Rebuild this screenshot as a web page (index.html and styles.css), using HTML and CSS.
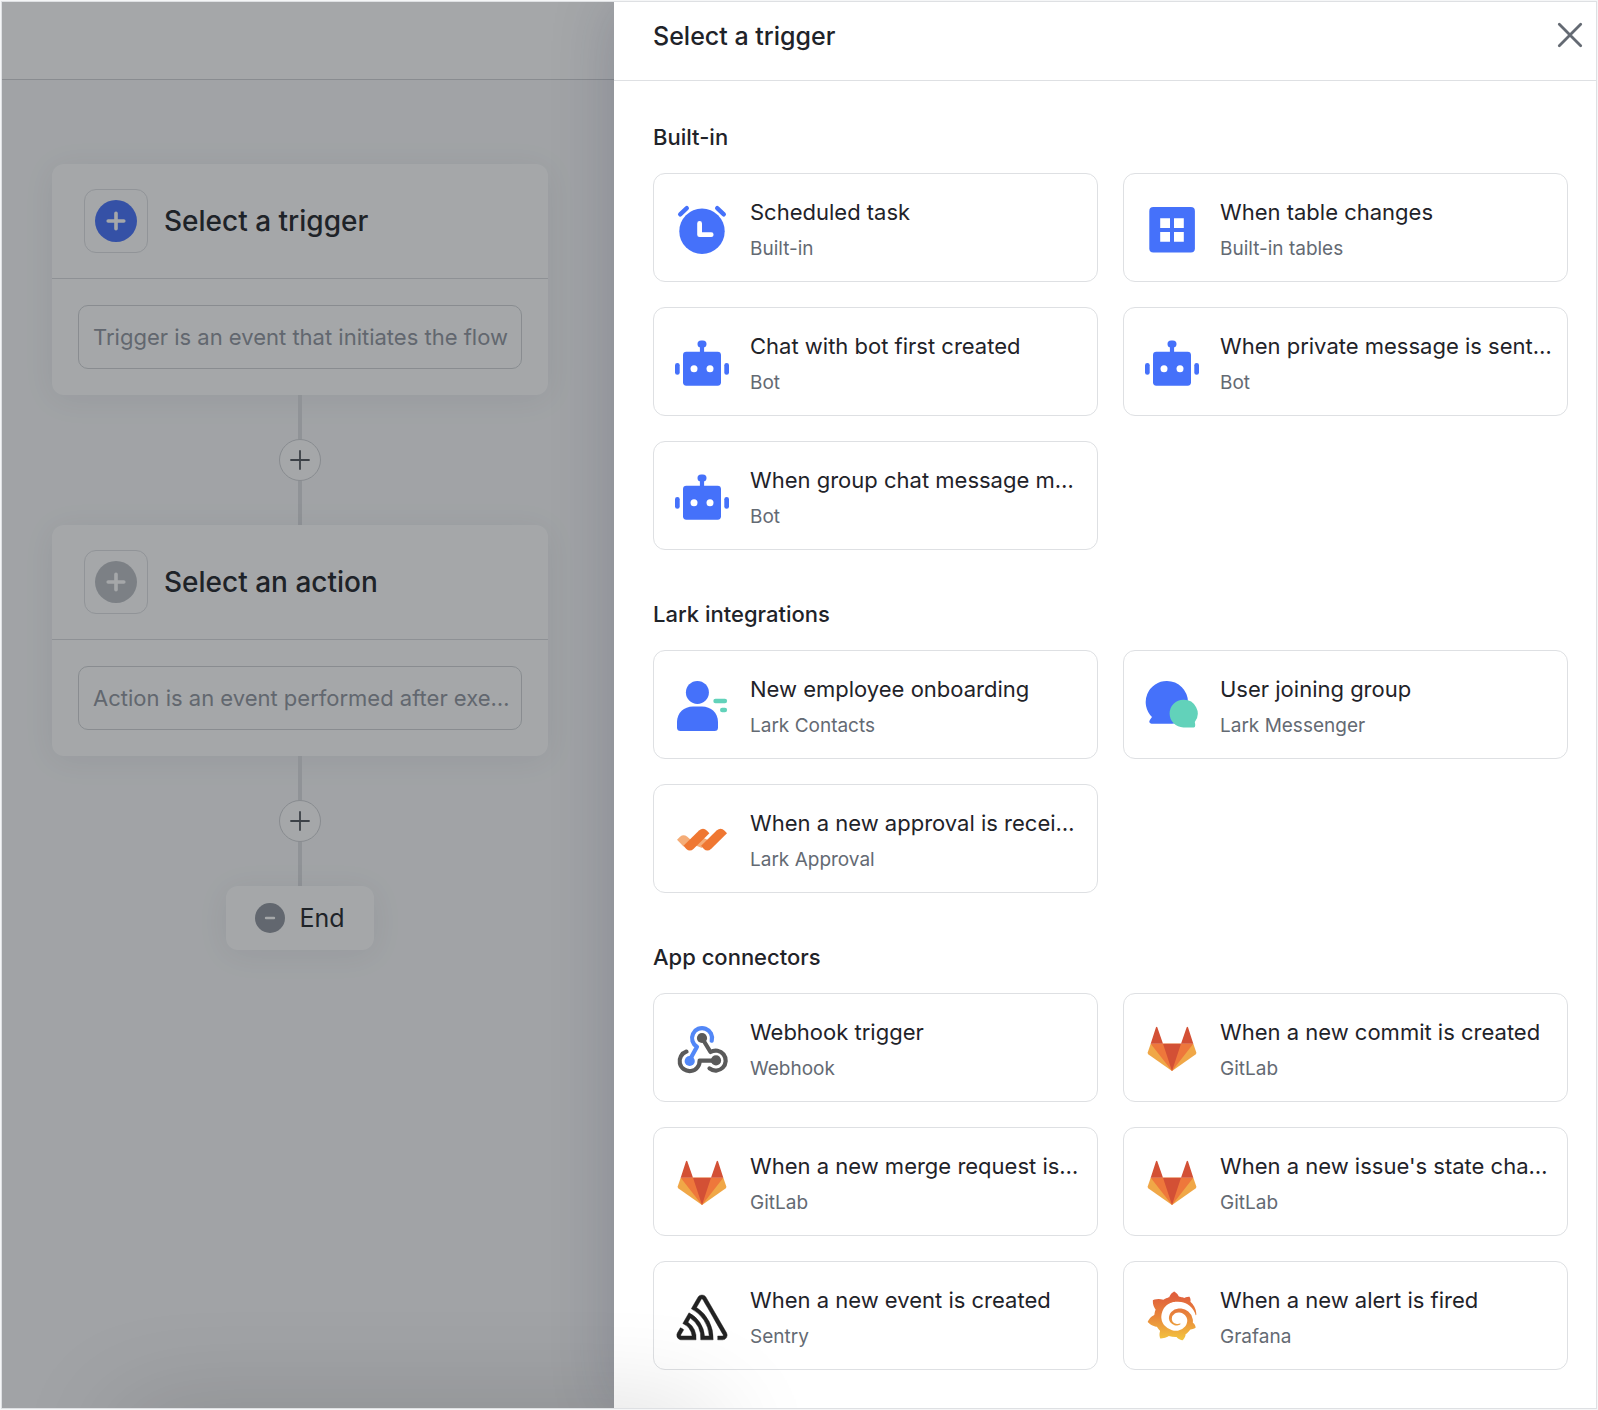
FILE: index.html
```html
<!DOCTYPE html>
<html lang="en">
<head>
<meta charset="utf-8">
<meta name="viewport" content="width=device-width, initial-scale=1">
<title>Select a trigger</title>
<link rel="stylesheet" href="styles.css">
</head>
<body>
<svg class="sprite" aria-hidden="true">
  <defs>
    <linearGradient id="grafana-fill" x1="0" y1="0" x2="0" y2="1">
      <stop offset="0.1" stop-color="#e0603c"/>
      <stop offset="0.5" stop-color="#e8853b"/>
      <stop offset="1" stop-color="#f3c63f"/>
    </linearGradient>
    <symbol id="icon-clock" viewBox="0 0 54 54">
      <circle cx="27" cy="30.3" r="22.7" fill="#4571fa"/>
      <path d="M5.2 13.3 11.8 7.2M42.2 7.2l6.6 6.1" stroke="#4571fa" stroke-width="4.4" stroke-linecap="round"/>
      <path d="M24.6 22.4v11.3h11.6" fill="none" stroke="#fff" stroke-width="4.8" stroke-linecap="round" stroke-linejoin="round"/>
    </symbol>
    <symbol id="icon-table" viewBox="0 0 54 54">
      <rect x="4.3" y="6" width="45.6" height="45.6" rx="4" fill="#4571fa"/>
      <path d="M15.2 17.3H25V27h-9.800zM29 17.300h9.800V27H29zM15.200 31H25v9.800h-9.800zM29 31h9.800v9.800H29z" fill="#fff"/>
    </symbol>
    <symbol id="icon-bot" viewBox="0 0 54 54">
      <g fill="#4571fa">
        <rect x="22.500" y="5.400" width="9" height="7.200" rx="3.600"/>
        <rect x="24.900" y="9" width="4.200" height="9"/>
        <rect x="8" y="16.700" width="38" height="34" rx="3.400"/>
        <rect x="0" y="28" width="4.700" height="11.700" rx="2.300"/>
        <rect x="49.300" y="28" width="4.700" height="11.700" rx="2.300"/>
      </g>
      <circle cx="19" cy="33.800" r="3.500" fill="#fff"/>
      <circle cx="35" cy="33.800" r="3.500" fill="#fff"/>
    </symbol>
    <symbol id="icon-contacts" viewBox="0 0 54 54">
      <circle cx="22.400" cy="14.400" r="11.500" fill="#4571fa"/>
      <path d="M2 44c0-9 7-15.400 16-15.400h9c9 0 16 6.400 16 15.400v5.500q0 3.500-3.500 3.500h-34Q2 53 2 49.500z" fill="#4571fa"/>
      <rect x="38.300" y="20.700" width="13.800" height="4.500" rx="2.200" fill="#62d2ba"/>
      <rect x="45" y="29.700" width="7.100" height="4.600" rx="2.200" fill="#62d2ba"/>
    </symbol>
    <symbol id="icon-messenger" viewBox="0 0 54 54">
      <path d="M22 3a21 21 0 0 1 21 21q0 21.700-16 21.700H6.500q-3.500-.6-1.500-4l2-2.700A21 21 0 0 1 22 3z" fill="#4571fa"/>
      <path d="M38.400 21.800a13.800 13.800 0 0 1 11.400 22.200q1.200 5.400-1 5.400H38.400a13.800 13.800 0 0 1 0-27.600z" fill="#62d2ba"/>
    </symbol>
    <symbol id="icon-approval" viewBox="0 0 54 54">
      <path d="M2 27.800 5 24.700q3.500-2.800 7-.2l4 3.600-7.500 6.300zM19.400 32.900l7-8 6.600 3-6 8z" fill="#f5ad78"/>
      <path id="approval-stroke" d="M8.500 33.700 24 18.500q4.200-3.400 8 .2l2.400 2.500-15.700 15.500q-3.900 3.700-7.400.2z" fill="#ef7732"/>
      <use href="#approval-stroke" x="17.600"/>
    </symbol>
    <symbol id="icon-webhook" viewBox="0 0 54 54">
      <g fill="none" stroke-width="4.200" stroke-linecap="round" stroke-linejoin="round">
        <path d="M27 17l8.500 14A10 10 0 1 1 34.500 47.400M11.500 30.600A10 10 0 1 0 24.600 39.600h16" stroke="#5a5a5a"/>
        <path d="M36.700 19.700A10 10 0 1 0 22 25.700L14.700 39" stroke="#5287f7"/>
      </g>
      <circle cx="27" cy="17" r="5.100" fill="#5a5a5a"/>
      <circle cx="41" cy="39.400" r="5.100" fill="#5a5a5a"/>
      <circle cx="14.700" cy="40" r="5.100" fill="#5287f7"/>
    </symbol>
    <symbol id="icon-gitlab" viewBox="0 0 54 54">
      <path d="M5.700 22.700 2.700 31.500q-.3 1.200.8 2L27 50 50.500 33.500q1.100-.8.8-2l-3-8.800z" fill="#f0a747"/>
      <path d="M5.700 22.700h42.600L27 50z" fill="#ee773b"/>
      <path d="M5.700 22.700 11 6.300q.6-1.200 1.300 0l5.700 16.400zM36 22.700l5.700-16.400q.7-1.200 1.300 0l5.300 16.400zM18 22.700h18L27 50z" fill="#d35035"/>
    </symbol>
    <symbol id="icon-sentry" viewBox="0 0 54 54">
      <path transform="translate(1.800 3) scale(2.100 2.120)" stroke="#222" stroke-width=".2" fill="#222" d="M13.91 2.505c-.873-1.448-2.972-1.448-3.844 0L6.904 7.92a15.478 15.478 0 0 1 8.53 12.811h-2.221A13.301 13.301 0 0 0 5.784 9.814l-2.926 5.06a7.65 7.65 0 0 1 4.435 5.848H2.194a.365.365 0 0 1-.298-.534l1.413-2.402a5.16 5.16 0 0 0-1.614-.913L.296 19.275a2.182 2.182 0 0 0 .812 2.999 2.24 2.24 0 0 0 1.086.288h6.983a9.322 9.322 0 0 0-3.845-8.318l1.11-1.922a11.47 11.47 0 0 1 4.95 10.24h5.915a17.242 17.242 0 0 0-7.885-15.28l2.244-3.845a.37.37 0 0 1 .504-.13c.255.14 9.75 16.708 9.928 16.9a.365.365 0 0 1-.327.543h-2.287c.029.612.029 1.223 0 1.831h2.297a2.206 2.206 0 0 0 1.922-3.31z"/>
    </symbol>
    <symbol id="icon-grafana" viewBox="0 0 54 54">
      <path transform="translate(.6 2.400) scale(2.200 2.040)" fill="url(#grafana-fill)" d="M23.02 10.59a8.578 8.578 0 0 0-.862-3.034 8.911 8.911 0 0 0-1.789-2.445c.337-1.342-.413-2.505-.413-2.505-1.292-.08-2.113.4-2.416.62-.052-.02-.102-.044-.154-.064-.22-.089-.446-.172-.677-.247-.231-.073-.47-.14-.711-.197a9.867 9.867 0 0 0-.875-.161C14.557.753 12.94 0 12.94 0c-1.804 1.145-2.147 2.744-2.147 2.744l-.018.093c-.098.029-.2.057-.298.088-.138.042-.275.094-.413.143-.138.055-.275.107-.41.166a8.869 8.869 0 0 0-1.557.87l-.063-.029c-2.497-.955-4.716.195-4.716.195-.203 2.658.996 4.33 1.235 4.636a11.608 11.608 0 0 0-.607 2.635C1.636 12.677.953 15.014.953 15.014c1.926 2.214 4.171 2.351 4.171 2.351.003-.002.006-.002.006-.005.285.509.615.994.986 1.446.156.19.32.371.488.548-.704 2.009.099 3.68.099 3.68 2.144.08 3.553-.937 3.849-1.173a9.784 9.784 0 0 0 3.164.501h.08l.055-.003.107-.002.103-.005.003.002c1.01 1.44 2.788 1.646 2.788 1.646 1.264-1.332 1.337-2.653 1.337-2.94v-.058c0-.02-.003-.039-.003-.06.265-.187.52-.387.758-.6a7.875 7.875 0 0 0 1.415-1.7c1.43.083 2.437-.885 2.437-.885-.236-1.49-1.085-2.216-1.264-2.354l-.018-.013-.016-.013a.217.217 0 0 1-.031-.02c.008-.092.016-.18.02-.27.011-.162.016-.323.016-.48v-.253l-.005-.098-.008-.135a1.891 1.891 0 0 0-.01-.13c-.003-.042-.008-.083-.013-.125l-.016-.124-.018-.122a6.215 6.215 0 0 0-2.032-3.73 6.015 6.015 0 0 0-3.222-1.46 6.292 6.292 0 0 0-.85-.048l-.107.002h-.063l-.044.003-.104.008a4.777 4.777 0 0 0-3.335 1.695c-.332.4-.592.84-.768 1.297a4.594 4.594 0 0 0-.312 1.817l.003.091c.005.055.007.11.013.164a3.615 3.615 0 0 0 .698 1.82 3.53 3.53 0 0 0 1.827 1.282c.33.098.66.14.971.137.039 0 .078 0 .114-.002l.063-.003c.02 0 .041-.003.062-.003.034-.002.065-.007.099-.01.007 0 .018-.003.028-.003l.031-.005.06-.008a1.18 1.18 0 0 0 .112-.02c.036-.008.072-.013.109-.024a2.634 2.634 0 0 0 .914-.415c.028-.02.056-.041.085-.065a.248.248 0 0 0 .039-.35.244.244 0 0 0-.309-.06l-.078.042c-.09.044-.184.083-.283.116a2.476 2.476 0 0 1-.475.096c-.028.003-.054.006-.083.006l-.083.002c-.026 0-.054 0-.08-.002l-.102-.006h-.012l-.024.006c-.016-.003-.031-.003-.044-.006-.031-.002-.06-.007-.091-.01a2.59 2.59 0 0 1-.724-.213 2.557 2.557 0 0 1-.667-.438 2.52 2.52 0 0 1-.805-1.475 2.306 2.306 0 0 1-.029-.444l.006-.122v-.023l.002-.031c.003-.021.003-.04.005-.06a3.163 3.163 0 0 1 1.352-2.29 3.12 3.12 0 0 1 .937-.43 2.946 2.946 0 0 1 .776-.101h.06l.07.002.045.003h.026l.07.005a4.041 4.041 0 0 1 1.635.49 3.94 3.94 0 0 1 1.602 1.662 3.77 3.77 0 0 1 .397 1.414l.005.076.003.075c.002.026.002.05.002.075 0 .024.003.052 0 .07v.065l-.002.073-.008.174a6.195 6.195 0 0 1-.08.639 5.1 5.1 0 0 1-.267.927 5.31 5.31 0 0 1-.624 1.13 5.052 5.052 0 0 1-3.237 2.014 4.82 4.82 0 0 1-.649.066l-.039.003h-.287a6.607 6.607 0 0 1-1.716-.265 6.776 6.776 0 0 1-3.4-2.274 6.75 6.75 0 0 1-.746-1.15 6.616 6.616 0 0 1-.714-2.596l-.005-.083-.002-.02v-.056l-.003-.073v-.096l-.003-.104v-.07l.003-.163c.008-.22.026-.45.054-.678a8.707 8.707 0 0 1 .28-1.355c.128-.444.286-.872.473-1.277a7.04 7.04 0 0 1 1.456-2.1 5.925 5.925 0 0 1 .953-.763c.169-.111.343-.213.524-.306.089-.05.182-.091.273-.135.047-.02.093-.042.138-.062a7.177 7.177 0 0 1 .714-.267l.145-.045c.049-.015.098-.026.148-.041.098-.029.197-.052.296-.076.049-.013.1-.02.15-.033l.15-.032.151-.028.076-.013.075-.01.153-.024c.057-.01.114-.013.171-.023l.169-.021c.036-.003.073-.008.106-.01l.073-.008.036-.003.042-.002c.057-.003.114-.008.171-.01l.086-.006h.023l.037-.003.145-.007a7.999 7.999 0 0 1 1.708.125 7.917 7.917 0 0 1 2.048.68 8.253 8.253 0 0 1 1.672 1.09l.09.077.089.078c.06.052.114.107.171.159.057.052.112.106.166.16.052.055.107.107.159.164a8.671 8.671 0 0 1 1.41 1.978c.012.026.028.052.04.078l.04.078.075.156c.023.051.05.1.07.153l.065.15a8.848 8.848 0 0 1 .45 1.34.19.19 0 0 0 .201.142.186.186 0 0 0 .172-.184c.01-.246.002-.532-.024-.856z"/>
    </symbol>
    <symbol id="icon-plus-thin" viewBox="0 0 20 20">
      <path d="M10 1v18M1 10h18" stroke="currentColor" stroke-width="1.800" stroke-linecap="round"/>
    </symbol>
    <symbol id="icon-plus-bold" viewBox="0 0 20 20">
      <path d="M10 2.200v15.600M2.200 10h15.600" stroke="currentColor" stroke-width="3.600" stroke-linecap="round"/>
    </symbol>
  </defs>
</svg>

<div class="app">
  <main class="flow">
    <div class="flow-bar"></div>
    <div class="flow-canvas">
      <section class="node">
        <div class="node-head">
          <span class="node-badge"><span class="disc disc-blue"><svg class="disc-plus"><use href="#icon-plus-bold"/></svg></span></span>
          <h2 class="node-title">Select a trigger</h2>
        </div>
        <div class="node-body">
          <input class="node-input" type="text" readonly aria-label="Trigger" placeholder="Trigger is an event that initiates the flow">
        </div>
      </section>
      <div class="link">
        <button class="add" type="button" aria-label="Add step"><svg class="add-plus"><use href="#icon-plus-thin"/></svg></button>
      </div>
      <section class="node">
        <div class="node-head">
          <span class="node-badge"><span class="disc disc-gray"><svg class="disc-plus"><use href="#icon-plus-bold"/></svg></span></span>
          <h2 class="node-title">Select an action</h2>
        </div>
        <div class="node-body">
          <input class="node-input" type="text" readonly aria-label="Action" placeholder="Action is an event performed after exe…">
        </div>
      </section>
      <div class="link">
        <button class="add" type="button" aria-label="Add step"><svg class="add-plus"><use href="#icon-plus-thin"/></svg></button>
      </div>
      <div class="end">
        <svg class="end-icon" viewBox="0 0 30 30"><circle cx="15" cy="15" r="15" fill="#8f959e"/><path d="M11 15h8" stroke="#fff" stroke-width="2.400" stroke-linecap="round"/></svg>
        <span>End</span>
      </div>
    </div>
    <div class="mask"></div>
  </main>

  <aside class="drawer">
    <header class="drawer-head">
      <h1 class="drawer-title">Select a trigger</h1>
      <button class="close" type="button" aria-label="Close"><svg class="close-icon" viewBox="0 0 32 32"><path d="M5.300 4.300l21.400 21.400M26.700 4.300 5.300 25.700" stroke="#646a73" stroke-width="2.800" stroke-linecap="round"/></svg></button>
    </header>
    <div class="drawer-body">
      <section class="group">
        <h2 class="group-title">Built-in</h2>
        <div class="cards">
          <button class="card" type="button"><svg class="card-icon"><use href="#icon-clock"/></svg><span class="card-text"><span class="card-name">Scheduled task</span><span class="card-app">Built-in</span></span></button>
          <button class="card" type="button"><svg class="card-icon"><use href="#icon-table"/></svg><span class="card-text"><span class="card-name">When table changes</span><span class="card-app">Built-in tables</span></span></button>
          <button class="card" type="button"><svg class="card-icon"><use href="#icon-bot"/></svg><span class="card-text"><span class="card-name">Chat with bot first created</span><span class="card-app">Bot</span></span></button>
          <button class="card" type="button"><svg class="card-icon"><use href="#icon-bot"/></svg><span class="card-text"><span class="card-name">When private message is sent…</span><span class="card-app">Bot</span></span></button>
          <button class="card" type="button"><svg class="card-icon"><use href="#icon-bot"/></svg><span class="card-text"><span class="card-name">When group chat message m…</span><span class="card-app">Bot</span></span></button>
        </div>
      </section>
      <section class="group">
        <h2 class="group-title">Lark integrations</h2>
        <div class="cards">
          <button class="card" type="button"><svg class="card-icon"><use href="#icon-contacts"/></svg><span class="card-text"><span class="card-name">New employee onboarding</span><span class="card-app">Lark Contacts</span></span></button>
          <button class="card" type="button"><svg class="card-icon"><use href="#icon-messenger"/></svg><span class="card-text"><span class="card-name">User joining group</span><span class="card-app">Lark Messenger</span></span></button>
          <button class="card" type="button"><svg class="card-icon"><use href="#icon-approval"/></svg><span class="card-text"><span class="card-name">When a new approval is recei…</span><span class="card-app">Lark Approval</span></span></button>
        </div>
      </section>
      <section class="group">
        <h2 class="group-title">App connectors</h2>
        <div class="cards">
          <button class="card" type="button"><svg class="card-icon"><use href="#icon-webhook"/></svg><span class="card-text"><span class="card-name">Webhook trigger</span><span class="card-app">Webhook</span></span></button>
          <button class="card" type="button"><svg class="card-icon"><use href="#icon-gitlab"/></svg><span class="card-text"><span class="card-name">When a new commit is created</span><span class="card-app">GitLab</span></span></button>
          <button class="card" type="button"><svg class="card-icon"><use href="#icon-gitlab"/></svg><span class="card-text"><span class="card-name">When a new merge request is…</span><span class="card-app">GitLab</span></span></button>
          <button class="card" type="button"><svg class="card-icon"><use href="#icon-gitlab"/></svg><span class="card-text"><span class="card-name">When a new issue's state cha…</span><span class="card-app">GitLab</span></span></button>
          <button class="card" type="button"><svg class="card-icon"><use href="#icon-sentry"/></svg><span class="card-text"><span class="card-name">When a new event is created</span><span class="card-app">Sentry</span></span></button>
          <button class="card" type="button"><svg class="card-icon"><use href="#icon-grafana"/></svg><span class="card-text"><span class="card-name">When a new alert is fired</span><span class="card-app">Grafana</span></span></button>
        </div>
      </section>
    </div>
  </aside>
  <div class="bottom-shade"></div>
</div>
</body>
</html>
```
FILE: styles.css
```css
* {
  box-sizing: border-box;
}

body {
  margin: 0;
  padding: 1px;
  min-height: 100vh;
  display: flex;
  background: #f5f6f7;
  color: #1f2329;
  font-family: Inter, "Liberation Sans", sans-serif;
}

h1,
h2 {
  margin: 0;
  font-weight: 500;
}

button,
input {
  font: inherit;
  color: inherit;
}

.sprite {
  position: absolute;
  width: 0;
  height: 0;
}

.app {
  position: relative;
  flex: 1;
  display: grid;
  grid-template-columns: minmax(0, 612fr) minmax(0, 982fr);
  border: 1px solid #dee0e3;
  overflow: hidden;
}

/* Flow editor */

.flow {
  position: relative;
  display: flex;
  flex-direction: column;
  background: #f8f9fa;
}

.flow-bar {
  height: 78px;
  background: #fff;
  border-bottom: 1px solid #d0d3d6;
}

.flow-canvas {
  padding: 84px 66px 40px 50px;
  display: flex;
  flex-direction: column;
  align-items: center;
}

.node {
  width: 100%;
  background: #fff;
  border-radius: 12px;
  box-shadow: 0 4px 32px rgba(31, 35, 60, 0.07);
}

.node-head {
  display: flex;
  align-items: center;
  gap: 16px;
  height: 115px;
  padding: 0 32px;
  border-bottom: 1px solid #d9dbde;
}

.node-badge {
  display: grid;
  place-items: center;
  width: 64px;
  height: 64px;
  border: 1px solid #dee0e3;
  border-radius: 12px;
}

.disc {
  display: grid;
  place-items: center;
  width: 42px;
  height: 42px;
  border-radius: 50%;
  color: #fff;
}

.disc-blue {
  background: #4571fa;
}

.disc-gray {
  background: #bbbfc4;
}

.disc-plus,
.add-plus {
  width: 20px;
  height: 20px;
}

.node-title {
  font-size: 28px;
  line-height: 36px;
}

.node-body {
  padding: 26px;
}

.node-input {
  display: block;
  width: 100%;
  height: 64px;
  padding: 0 0 0 14px;
  border: 1px solid #d0d3d6;
  border-radius: 10px;
  background: #fff;
  font-size: 22px;
  outline: none;
  text-overflow: ellipsis;
}

.node-input::placeholder {
  color: #8f959e;
  opacity: 1;
}

.link {
  display: flex;
  align-items: center;
  justify-content: center;
  width: 42px;
  height: 130px;
  background: linear-gradient(#dcdee1, #dcdee1) center / 4px 100% no-repeat;
}

.add {
  display: grid;
  place-items: center;
  width: 42px;
  height: 42px;
  padding: 0;
  border: 1px solid #cfd1d5;
  border-radius: 50%;
  background: #fff;
  color: #51565d;
}

.end {
  display: flex;
  align-items: center;
  justify-content: center;
  gap: 14px;
  width: 148px;
  height: 64px;
  border-radius: 12px;
  background: #fff;
  box-shadow: 0 4px 32px rgba(31, 35, 60, 0.07);
  font-size: 25px;
}

.end-icon {
  width: 30px;
  height: 30px;
}

.mask {
  position: absolute;
  inset: 0;
  background: rgba(31, 35, 41, 0.4);
}

/* Trigger drawer */

.drawer {
  position: relative;
  background: #fff;
  box-shadow: 0 0 60px rgba(31, 35, 70, 0.2);
}

.drawer-head {
  display: flex;
  align-items: center;
  justify-content: space-between;
  height: 79px;
  padding: 0 10px 10px 39px;
  border-bottom: 1px solid #dee0e3;
}

.drawer-title {
  font-size: 25px;
  line-height: 36px;
}

.close {
  display: grid;
  place-items: center;
  width: 32px;
  height: 32px;
  padding: 0;
  border: 0;
  background: none;
}

.close-icon {
  width: 32px;
  height: 32px;
}

.drawer-body {
  display: flex;
  flex-direction: column;
  gap: 47px;
  padding: 39px 28px 38px 39px;
}

.group-title {
  margin-bottom: 19px;
  font-size: 22px;
  line-height: 34px;
}

.cards {
  display: grid;
  grid-template-columns: repeat(2, minmax(0, 1fr));
  gap: 25px;
}

.card {
  display: flex;
  align-items: center;
  gap: 21px;
  height: 109px;
  padding: 0 8px 0 21px;
  border: 1px solid #dee0e3;
  border-radius: 12px;
  background: #fff;
  text-align: left;
}

.card-icon {
  flex: none;
  width: 54px;
  height: 54px;
}

.card-text {
  display: flex;
  flex-direction: column;
  min-width: 0;
  padding-top: 6px;
}

.card-name,
.card-app {
  white-space: nowrap;
}

.card-name {
  font-size: 22px;
  line-height: 36px;
}

.card-app {
  font-size: 19px;
  line-height: 38px;
  color: #646a73;
}

/* Soft shade rising from the bottom edge */

.bottom-shade {
  position: absolute;
  left: 8%;
  bottom: -60px;
  width: 36%;
  height: 40px;
  box-shadow: 0 0 110px 10px rgba(0, 0, 0, 0.2);
  pointer-events: none;
}
```
